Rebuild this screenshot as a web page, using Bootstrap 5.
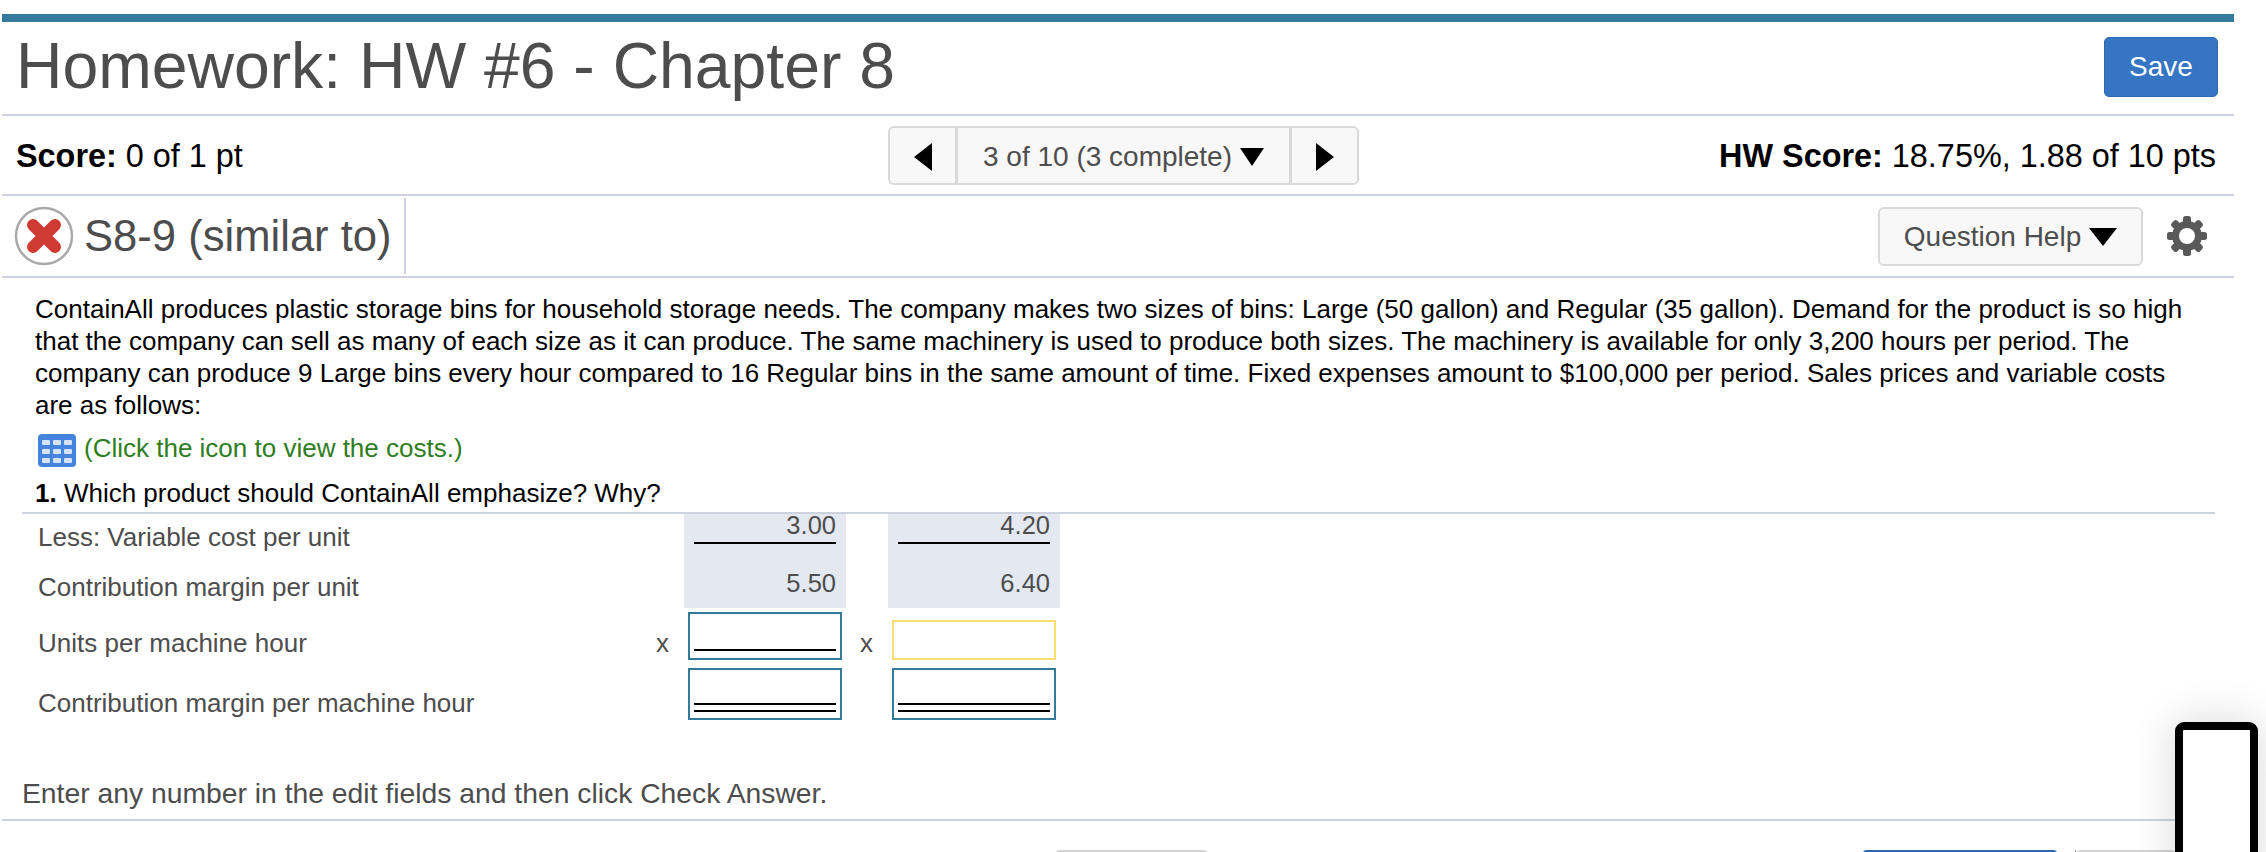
<!DOCTYPE html>
<html lang="en">

<head>
    <meta charset="UTF-8" />
    <meta name="viewport" content="width=device-width, initial-scale=1.0" />
    <title>Homework: HW #6 - Chapter 8</title>
    <link href="https://cdn.jsdelivr.net/npm/bootstrap@5.3.2/dist/css/bootstrap.min.css" rel="stylesheet">
    <style>
        html, body { height: 852px; overflow: hidden; }
        body { font-family: "Liberation Sans", Arial, sans-serif; background: #fff; color: #000; }
        .hw-page { width: 2232px; margin: 14px 0 0 2px; border-top: 8px solid #347a9c; }
        .hw-rule { border-bottom: 2px solid #cdd2df; }
        .hw-head { height: 94px; padding: 0 16px 2px 14px; }
        .hw-title { font-size: 64.3px; font-weight: 400; color: #4d4d4d; margin: 0 0 1px; line-height: 1; }
        .hw-save { width: 114px; height: 60px; padding: 0; font-size: 28px; background: #3575c3; border: 1px solid #2d68b0; border-radius: 5px; }
        .hw-score { height: 80px; padding: 3px 18px 0 14px; font-size: 32.4px; }
        .hw-score b { font-weight: 700; }
        .hw-score-left { flex: 0 0 872px; }
        .hw-score-right { flex: 1 1 auto; text-align: right; }
        .hw-pager { flex: 0 0 471px; height: 59px; margin-top: -3px; }
        .hw-pager .btn { height: 59px; font-size: 28px; color: #4d4d4d; background: #f8f8f8; border: 2px solid #d9d9d9; padding: 4px 0 0; display: flex; align-items: center; justify-content: center; gap: 8px; }
        .hw-pager .hw-arrow { flex: 0 0 69px; }
        .hw-pager .hw-mid { flex: 1 1 auto; }
        .hw-tool { height: 82px; padding: 0 27px 0 12px; }
        .hw-name { height: 76px; padding-right: 12px; border-right: 2px solid #cdd2df; font-size: 43.6px; color: #4d4d4d; gap: 10px; }
        .hw-name span { padding-top: 2px; }
        .hw-help { width: 265px; height: 59px; padding: 2px 0 0; font-size: 28px; color: #4d4d4d; background: #f8f8f8; border: 2px solid #d9d9d9; border-radius: 6px; display: flex; align-items: center; justify-content: center; gap: 8px; }
        .hw-body { padding: 15px 40px 0 33px; font-size: 26px; line-height: 32px; }
        .hw-body p { margin: 0; }
        .hw-link { color: #2e7d1e; margin-top: 13px; height: 33px; gap: 8px; padding-left: 3px; }
        .hw-link span { padding-bottom: 6px; }
        .hw-ask { margin-top: 10px; padding-bottom: 3px; }
        .hw-grid { display: grid; grid-template-columns: 662px 162px 42px 172px; grid-template-rows: 48px 46px 56px 60px; margin-left: 20px; border-top: 2px solid #cdd2df; width: 2193px; font-size: 26px; color: #4d4d4d; line-height: 30px; }
        .hw-label { padding-left: 16px; display: flex; align-items: center; }
        .hw-lift { padding-bottom: 2px; }
        .hw-drop-a { padding-top: 3px; }
        .hw-drop-b { padding-top: 14px; }
        .hw-drop-c { padding-top: 18px; }
        .hw-times { display: flex; justify-content: flex-end; align-items: center; padding-right: 15px; }
        .hw-times-own { padding-top: 14px; }
        .hw-shade { background: #e3e8f1; text-align: right; font-size: 25.5px; }
        .hw-shade > div { margin: 0 10px; }
        .hw-under { height: 30px; border-bottom: 2px solid #000; line-height: 22px; }
        .hw-sum { padding-top: 6px; }
        .hw-box { margin: 4px 4px 0; border: 2px solid #347a9c; padding: 0 4px; }
        .hw-in1 { height: 48px; padding-bottom: 7px; display: flex; align-items: flex-end; }
        .hw-in1 > div { width: 100%; border-bottom: 2px solid #000; }
        .hw-in2 { height: 52px; padding-bottom: 6px; display: flex; align-items: flex-end; }
        .hw-in2 > div { width: 100%; height: 9px; border-top: 2px solid #000; border-bottom: 2px solid #000; }
        .hw-yellow { height: 40px; margin-top: 12px; border-color: #f8df70; }
        .hw-note { margin-top: 53px; padding: 0 0 10px 20px; font-size: 28.3px; line-height: 32px; color: #4d4d4d; }
        .hw-foot { margin-top: 29px; }
        .hw-stub { height: 30px; border: 2px solid #d2d2d2; border-radius: 5px; background: #f8f8f8; }
        .hw-stub-a { width: 153px; margin-left: 1053px; }
        .hw-stub-b { width: 196px; margin-left: 654px; background: #3575c3; border-color: #2d68b0; }
        .hw-stub-c { width: 100px; margin-left: 28px; }
        .hw-sep { width: 1px; height: 30px; background: #888; margin-left: 17px; margin-right: -28px; }
        .hw-phone { position: absolute; left: 2175px; top: 722px; width: 83px; height: 160px; background: #fff; border: 8px solid #000; border-radius: 9px; box-shadow: 0 0 44px rgba(0, 0, 0, .16); }
    </style>
</head>

<body>
    <div class="hw-page">
        <!-- Title -->
        <div class="hw-head hw-rule d-flex justify-content-between align-items-center">
            <h1 class="hw-title">Homework: HW #6 - Chapter 8</h1>
            <button class="btn btn-primary hw-save">Save</button>
        </div>

        <!-- Score and pager -->
        <div class="hw-score hw-rule d-flex align-items-center">
            <div class="hw-score-left"><b>Score:</b> 0 of 1 pt</div>
            <div class="btn-group hw-pager">
                <button class="btn hw-arrow"><svg width="18" height="28" viewBox="0 0 18 28"><polygon points="18,0 18,28 0,14" fill="#000" /></svg></button>
                <button class="btn hw-mid">3 of 10 (3 complete)<svg width="24" height="18" viewBox="0 0 24 18"><polygon points="0,0 24,0 12,18" fill="#000" /></svg></button>
                <button class="btn hw-arrow"><svg width="18" height="28" viewBox="0 0 18 28"><polygon points="0,0 18,14 0,28" fill="#000" /></svg></button>
            </div>
            <div class="hw-score-right"><b>HW Score:</b> 18.75%, 1.88 of 10 pts</div>
        </div>

        <!-- Question name and tools -->
        <div class="hw-tool hw-rule d-flex justify-content-between align-items-center">
            <div class="hw-name d-flex align-items-center">
                <svg width="60" height="60" viewBox="0 0 60 60">
                    <circle cx="30" cy="30" r="28" fill="#fff" stroke="#a9a9a9" stroke-width="2.5" />
                    <path d="M19 19L41 41M41 19L19 41" stroke="#cf3a32" stroke-width="12" stroke-linecap="round" />
                </svg>
                <span>S8-9 (similar to)</span>
            </div>
            <div class="d-flex align-items-center gap-4">
                <button class="btn hw-help">Question Help<svg width="28" height="18" viewBox="0 0 28 18"><polygon points="0,0 28,0 14,18" fill="#000" /></svg></button>
                <svg width="40" height="40" viewBox="0 0 40 40">
                    <g fill="#595959">
                        <rect x="16" y="0" width="8" height="40" rx="2.5" />
                        <rect x="16" y="0" width="8" height="40" rx="2.5" transform="rotate(45 20 20)" />
                        <rect x="16" y="0" width="8" height="40" rx="2.5" transform="rotate(90 20 20)" />
                        <rect x="16" y="0" width="8" height="40" rx="2.5" transform="rotate(135 20 20)" />
                        <circle cx="20" cy="20" r="15" />
                    </g>
                    <circle cx="20" cy="20" r="8" fill="#fff" />
                </svg>
            </div>
        </div>

        <!-- Question text -->
        <div class="hw-body">
            <p>ContainAll produces plastic storage bins for household storage needs. The company makes two sizes of bins: Large (50 gallon) and Regular (35 gallon). Demand for the product is so high that the company can sell as many of each size as it can produce. The same machinery is used to produce both sizes. The machinery is available for only 3,200 hours per period. The company can produce 9 Large bins every hour compared to 16 Regular bins in the same amount of time. Fixed expenses amount to $100,000 per period. Sales prices and variable costs are as follows:</p>
            <div class="hw-link d-flex align-items-center">
                <svg width="38" height="33" viewBox="0 0 38 33">
                    <rect width="38" height="33" rx="4" fill="#4484dd" />
                    <g fill="#d5e3f8">
                        <rect x="4" y="6" width="8" height="5" rx="1" /><rect x="15" y="6" width="8" height="5" rx="1" /><rect x="26" y="6" width="8" height="5" rx="1" />
                        <rect x="4" y="15" width="8" height="5" rx="1" /><rect x="15" y="15" width="8" height="5" rx="1" /><rect x="26" y="15" width="8" height="5" rx="1" />
                        <rect x="4" y="24" width="8" height="5" rx="1" /><rect x="15" y="24" width="8" height="5" rx="1" /><rect x="26" y="24" width="8" height="5" rx="1" />
                    </g>
                </svg>
                <span>(Click the icon to view the costs.)</span>
            </div>
            <div class="hw-ask"><b>1.</b> Which product should ContainAll emphasize? Why?</div>
        </div>

        <!-- Answer table -->
        <div class="hw-grid">
            <div class="hw-label hw-lift">Less: Variable cost per unit</div>
            <div class="hw-shade"><div class="hw-under">3.00</div></div>
            <div></div>
            <div class="hw-shade"><div class="hw-under">4.20</div></div>

            <div class="hw-label hw-drop-a">Contribution margin per unit</div>
            <div class="hw-shade"><div class="hw-sum">5.50</div></div>
            <div></div>
            <div class="hw-shade"><div class="hw-sum">6.40</div></div>

            <div class="hw-label hw-drop-b justify-content-between">
                <span>Units per machine hour</span><span class="hw-times">x</span>
            </div>
            <div><div class="hw-box hw-in1"><div></div></div></div>
            <div class="hw-times hw-times-own">x</div>
            <div><div class="hw-box hw-yellow"></div></div>

            <div class="hw-label hw-drop-c">Contribution margin per machine hour</div>
            <div><div class="hw-box hw-in2"><div></div></div></div>
            <div></div>
            <div><div class="hw-box hw-in2"><div></div></div></div>
        </div>

        <div class="hw-note hw-rule">Enter any number in the edit fields and then click Check Answer.</div>

        <div class="hw-foot d-flex">
            <div class="hw-stub hw-stub-a"></div>
            <div class="hw-stub hw-stub-b"></div>
            <div class="hw-sep"></div>
            <div class="hw-stub hw-stub-c"></div>
        </div>
    </div>

    <div class="hw-phone"></div>

    <script src="https://cdn.jsdelivr.net/npm/bootstrap@5.3.2/dist/js/bootstrap.bundle.min.js"></script>
</body>

</html>
